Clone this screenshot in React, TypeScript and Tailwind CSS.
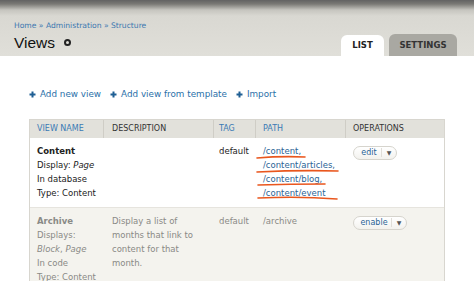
import React from "react";

const font = { fontFamily: '"DejaVu Sans", "Liberation Sans", sans-serif' };

function Pill({ label, w }: { label: string; w: string }) {
  return (
    <span
      className={`inline-flex items-center h-[14px] ${w} rounded-full border border-[#d6d4cd] bg-gradient-to-b from-white to-[#f3f2ee] text-[8px] text-[#2a6496]`}
    >
      <span className="flex-1 text-center pl-[3px]">{label}</span>
      <span className="w-px h-[9px] bg-[#e0ded8]" />
      <span className="w-[14px] text-center text-[6px] text-[#555]">▼</span>
    </span>
  );
}

function Plus() {
  return (
    <svg width="7" height="7" viewBox="0 0 7 7" className="shrink-0">
      <path d="M3.5 0.5V6.5M0.5 3.5H6.5" stroke="#1f5f94" strokeWidth="2" />
    </svg>
  );
}

export default function App() {
  return (
    <div className="w-[474px] h-[281px] overflow-hidden bg-white relative" style={font}>
      {/* Header */}
      <header className="h-[56px] flex items-end justify-between bg-[linear-gradient(#626262_0px,#7a7975_4px,#c6c5bf_10px,#d9d8d2_16px,#e0dfd9_56px)]">
        <div className="pl-[14px] pb-[6px]">
          <div className="text-[7.6px] text-[#3b78b0] leading-none">
            Home » Administration » Structure
          </div>
          <div className="mt-[5px] flex items-center gap-[9px]">
            <h1 className="text-[15.5px] leading-none text-[#111]" style={{ fontFamily: '"Liberation Sans", sans-serif' }}>
              Views
            </h1>
            <span className="w-[7px] h-[7px] rounded-full border-[2px] border-[#222]" />
          </div>
        </div>
        <div className="flex items-end gap-[5px] pr-[17px]">
          <div className="w-[43px] h-[21px] bg-white rounded-t-[6px] flex items-center justify-center text-[8.5px] font-bold text-[#222]">
            LIST
          </div>
          <div className="w-[68px] h-[22px] bg-[#a9a8a2] rounded-t-[6px] flex items-center justify-center text-[8.5px] font-bold text-[#333]">
            SETTINGS
          </div>
        </div>
      </header>

      {/* Actions */}
      <div className="pl-[29px] pt-[34px] flex gap-[9px] text-[8.8px] text-[#2a6fa8] leading-none">
        <span className="flex items-center gap-[4px]">
          <Plus /> Add new view
        </span>
        <span className="flex items-center gap-[4px]">
          <Plus /> Add view from template
        </span>
        <span className="flex items-center gap-[4px]">
          <Plus /> Import
        </span>
      </div>

      {/* Table */}
      <div className="ml-[29px] mt-[20px] w-[416px] border border-[#d8d6cf] text-[8.5px] leading-[14px]">
        <div className="grid grid-cols-[74px_110px_42px_90px_1fr] h-[18px] bg-[#e2e1db] items-center uppercase text-[8px] text-[#333]">
          <div className="pl-[7px] h-full flex items-center text-[#3a7ab5] border-r border-[#cfcdc6]">View name</div>
          <div className="pl-[8px] h-full flex items-center border-r border-[#cfcdc6]">Description</div>
          <div className="pl-[5px] h-full flex items-center text-[#3a7ab5] border-r border-[#cfcdc6]">Tag</div>
          <div className="pl-[7px] h-full flex items-center text-[#3a7ab5] border-r border-[#cfcdc6]">Path</div>
          <div className="pl-[7px] h-full flex items-center">Operations</div>
        </div>

        <div className="grid grid-cols-[74px_110px_42px_90px_1fr] bg-white pt-[6px] pb-[7px] text-[#222] border-b border-[#e6e4de]">
          <div className="pl-[7px]">
            <div className="font-bold">Content</div>
            <div>
              Display: <i>Page</i>
            </div>
            <div>In database</div>
            <div>Type: Content</div>
          </div>
          <div />
          <div className="pl-[5px]">default</div>
          <div className="pl-[7px] text-[#2a6496]">
            <div>/content,</div>
            <div>/content/articles,</div>
            <div>/content/blog,</div>
            <div>/content/event</div>
          </div>
          <div className="pl-[7px] pt-px">
            <Pill label="edit" w="w-[44px]" />
          </div>
        </div>

        <div className="grid grid-cols-[74px_110px_42px_90px_1fr] bg-[#f4f3ee] pt-[6px] pb-[2px] text-[#8a8a86]">
          <div className="pl-[7px]">
            <div className="font-bold">Archive</div>
            <div>Displays:</div>
            <div>
              <i>Block</i>, <i>Page</i>
            </div>
            <div>In code</div>
            <div>Type: Content</div>
          </div>
          <div className="pl-[8px] pr-[4px]">
            Display a list of months that link to content for that month.
          </div>
          <div className="pl-[5px]">default</div>
          <div className="pl-[7px]">/archive</div>
          <div className="pl-[7px] pt-px">
            <Pill label="enable" w="w-[54px]" />
          </div>
        </div>
      </div>

      {/* Hand-drawn annotation underlines */}
      <svg className="absolute left-0 top-0 pointer-events-none" width="474" height="281">
        <g stroke="#e9561d" strokeWidth="1.6" fill="none" strokeLinecap="round">
          <path d="M257 158 Q280 156 305 157" />
          <path d="M257 172 Q300 170 338 171" />
          <path d="M258 185 Q290 184 325 184" />
          <path d="M258 198 Q300 196 337 199" />
        </g>
      </svg>
    </div>
  );
}
